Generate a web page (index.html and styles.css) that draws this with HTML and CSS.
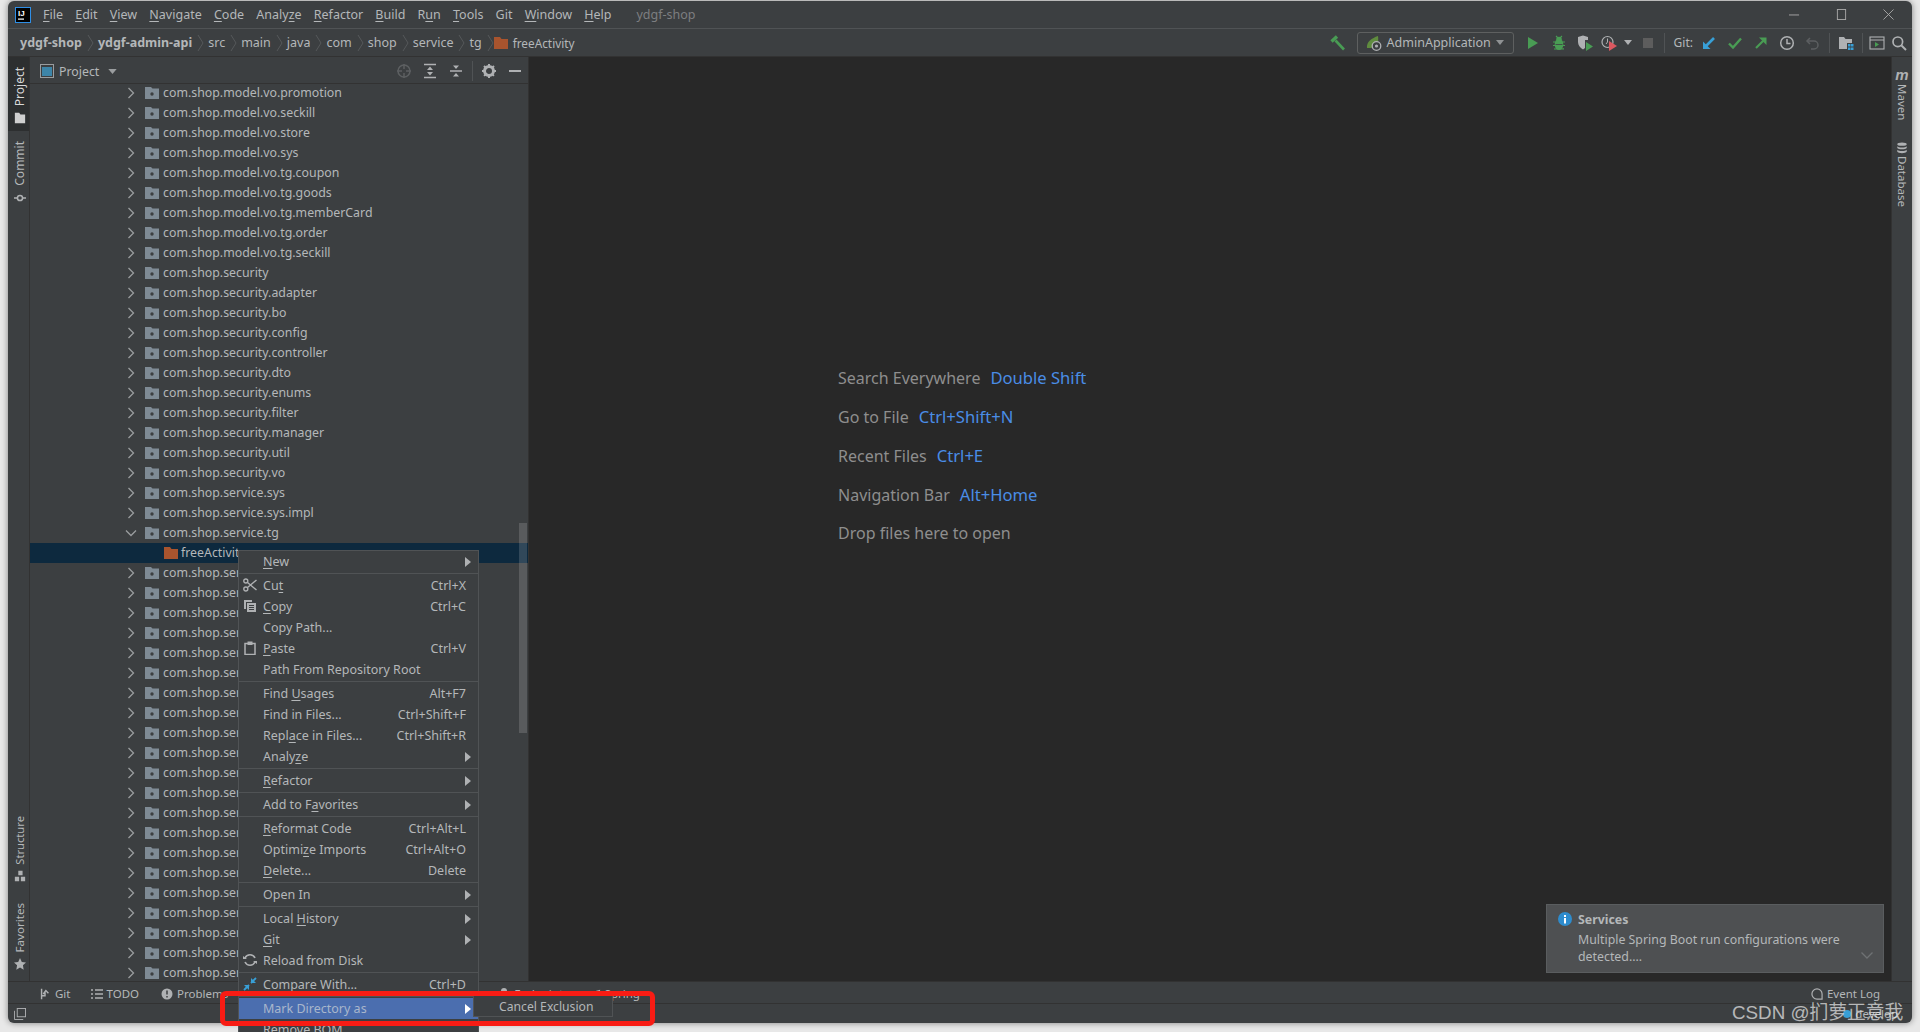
FILE: index.html
```html
<!DOCTYPE html>
<html lang="en">
<head>
<meta charset="utf-8">
<title>ydgf-shop</title>
<link rel="stylesheet" href="styles.css">
</head>
<body>
<svg class="defs" width="0" height="0">
  <defs>
    <symbol id="pkg" viewBox="0 0 14 12"><path d="M0 0h6l1.500 1.500H14V12H0z" fill="#7f8b95"/><circle cx="7" cy="7" r="1.700" fill="#3c3f41"/></symbol>
    <symbol id="chev" viewBox="0 0 8 12"><path d="M1.500 1l5 5-5 5" fill="none" stroke="#9a9d9f" stroke-width="1.300"/></symbol>
    <symbol id="sep" viewBox="0 0 8 20"><path d="M1 2l5 8-5 8" fill="none" stroke="#55585a" stroke-width="1"/></symbol>
    <symbol id="tri" viewBox="0 0 6 10"><path d="M0 0l6 5-6 5z" fill="#afb1b3"/></symbol>
  </defs>
</svg>
<div class="window">
  <header class="titlebar">
    <svg class="logo" viewBox="0 0 16 16"><rect x=".5" y=".5" width="15" height="15" fill="#000" stroke="#2f8fe6"/><text x="3" y="9" class="logo-t">IJ</text><rect x="3" y="11.500" width="6" height="1.200" fill="#fff"/></svg>
    <nav class="menubar">
      <span><u>F</u>ile</span><span><u>E</u>dit</span><span><u>V</u>iew</span><span><u>N</u>avigate</span><span><u>C</u>ode</span><span>Analy<u>z</u>e</span><span><u>R</u>efactor</span><span><u>B</u>uild</span><span>R<u>u</u>n</span><span><u>T</u>ools</span><span>Git</span><span><u>W</u>indow</span><span><u>H</u>elp</span>
    </nav>
    <span class="wintitle">ydgf-shop</span>
    <div class="winctl">
      <svg viewBox="0 0 12 12"><path d="M0 6.500h11" stroke="#a8a8a8" fill="none"/></svg>
      <svg viewBox="0 0 12 12"><rect x="1.500" y=".5" width="9" height="11" stroke="#a8a8a8" fill="none"/></svg>
      <svg viewBox="0 0 12 12"><path d="M.5.5l11 11M11.500.5l-11 11" stroke="#a8a8a8" fill="none"/></svg>
    </div>
  </header>
  <div class="navbar">
    <div class="crumbs">
      <b>ydgf-shop</b><svg class="csep"><use href="#sep"/></svg>
      <b>ydgf-admin-api</b><svg class="csep"><use href="#sep"/></svg>
      <span>src</span><svg class="csep"><use href="#sep"/></svg>
      <span>main</span><svg class="csep"><use href="#sep"/></svg>
      <span>java</span><svg class="csep"><use href="#sep"/></svg>
      <span>com</span><svg class="csep"><use href="#sep"/></svg>
      <span>shop</span><svg class="csep"><use href="#sep"/></svg>
      <span>service</span><svg class="csep"><use href="#sep"/></svg>
      <span>tg</span><svg class="csep"><use href="#sep"/></svg>
      <svg class="cfolder" viewBox="0 0 14 12"><path d="M0 0h6l1.500 2H14v10H0z" fill="#a8542e"/></svg><span class="clast">freeActivity</span>
    </div>
    <div class="tools">
      <svg class="ti" viewBox="0 0 16 16"><path d="M1.500 6.500L7 1.500" stroke="#499c54" stroke-width="3.400" fill="none"/><path d="M5.500 5.500l8.500 9" stroke="#499c54" stroke-width="2.600" fill="none"/></svg>
      <div class="combo m11">
        <svg class="ti" viewBox="0 0 16 16"><path d="M1 13C0 7 6 3 12 1c1 6-1 10-7 12z" fill="#5f8c3e"/><circle cx="10.500" cy="11" r="4.300" fill="#3c3f41" stroke="#afb1b3" stroke-width="1.300"/><circle cx="10.500" cy="11" r="1.600" fill="#afb1b3"/></svg>
        <span>AdminApplication</span>
        <svg class="dd" viewBox="0 0 10 6"><path d="M0 0h10L5 6z" fill="#8f9294"/></svg>
      </div>
      <svg class="ti m11" viewBox="0 0 16 16"><path d="M3 2l10 6-10 6z" fill="#499c54"/></svg>
      <svg class="ti m10" viewBox="0 0 16 16"><path d="M2 7h12M2 10.500h12M3 14l10-.1M5 1l2 2M11 1L9 3" stroke="#499c54" stroke-width="1.100" fill="none"/><circle cx="8" cy="4.500" r="2.800" fill="#499c54"/><ellipse cx="8" cy="9.500" rx="4.300" ry="5.500" fill="#499c54"/><path d="M4.500 9.500h7" stroke="#3c3f41" stroke-width=".8"/></svg>
      <svg class="ti m10" viewBox="0 0 16 16"><path d="M1 2l5-1.500 5 1.500v3H8v8l-2 1.500C3 13 1 10 1 7z" fill="#afb1b3"/><path d="M9 7l7 4.500L9 16z" fill="#499c54"/></svg>
      <svg class="ti m8" viewBox="0 0 16 16"><circle cx="6.500" cy="7" r="5.500" fill="none" stroke="#afb1b3" stroke-width="1.200"/><path d="M6.500 3.500V7L5 9" fill="none" stroke="#afb1b3"/><path d="M8 6l8 5-8 5z" fill="#db5860"/></svg>
      <svg class="dd m7" viewBox="0 0 8 5"><path d="M0 0h8L4 5z" fill="#afb1b3"/></svg>
      <svg class="ti m8" viewBox="0 0 16 16"><rect x="3" y="3" width="10" height="10" fill="#5d5d5d"/></svg>
      <i class="vsep m8"></i>
      <span class="gitlbl m9">Git:</span>
      <svg class="ti m8" viewBox="0 0 16 16"><path d="M3 13L13 3" stroke="#389fd6" stroke-width="2.600" fill="none"/><path d="M2 6.500V14h7.500z" fill="#389fd6"/></svg>
      <svg class="ti m10" viewBox="0 0 16 16"><path d="M2 8.500l4 4 8-9" stroke="#499c54" stroke-width="2.400" fill="none"/></svg>
      <svg class="ti m10" viewBox="0 0 16 16"><path d="M3 13L12 4" stroke="#499c54" stroke-width="2.200" fill="none"/><path d="M6 2.500h7.500V10z" fill="#499c54"/></svg>
      <svg class="ti m10" viewBox="0 0 16 16"><circle cx="8" cy="8" r="6.300" fill="none" stroke="#afb1b3" stroke-width="1.500"/><path d="M8 4v4.500h3.500" fill="none" stroke="#afb1b3" stroke-width="1.500"/></svg>
      <svg class="ti m10" viewBox="0 0 16 16"><path d="M5 3L2 6l3 3" fill="none" stroke="#5c5f61" stroke-width="1.500"/><path d="M2 6h7a3.800 3.800 0 0 1 0 8H6" fill="none" stroke="#5c5f61" stroke-width="1.500"/></svg>
      <i class="vsep m8"></i>
      <svg class="ti m8" viewBox="0 0 16 16"><path d="M1 2h5l1.500 2H14v4H9v6H1z" fill="#afb1b3"/><path d="M10 9h2.500v2.500H10zM13 9h2.500v2.500H13zM10 12.500h2.500V15H10zM13 12.500h2.500V15H13z" fill="#389fd6"/></svg>
      <i class="vsep m8"></i>
      <svg class="ti m6" viewBox="0 0 16 16"><rect x="1" y="2" width="14" height="12" fill="none" stroke="#afb1b3" stroke-width="1.100"/><path d="M1 5h14" stroke="#afb1b3" stroke-width="1"/><path d="M6 7l4 2.500L6 12z" fill="#499c54"/></svg>
      <svg class="ti m6" viewBox="0 0 16 16"><circle cx="6.800" cy="6.800" r="4.800" fill="none" stroke="#afb1b3" stroke-width="1.700"/><path d="M10.500 10.500l4.500 4.500" stroke="#afb1b3" stroke-width="2"/></svg>
    </div>
  </div>
  <main class="main">
    <aside class="strip strip-left">
      <div class="strip-group">
        <div class="vtab vtab-active">
          <span class="vtext">Project</span>
          <svg class="vicon" viewBox="0 0 14 14"><path d="M1 1h5l1.500 2H13v10H1z" fill="#cfcfcf"/></svg>
        </div>
        <div class="vtab">
          <span class="vtext">Commit</span>
          <svg class="vicon" viewBox="0 0 14 14"><circle cx="7" cy="7" r="3" fill="none" stroke="#afb1b3" stroke-width="1.800"/><path d="M0 7h4M10 7h4" stroke="#afb1b3" stroke-width="1.800"/></svg>
        </div>
      </div>
      <div class="strip-group">
        <div class="vtab vtab-low vtab-struct">
          <span class="vtext vtext-sm">Structure</span>
          <svg class="vicon" viewBox="0 0 14 14"><path d="M5 1h5v5H5zM1 8h5v5H1zM8 8h5v5H8z" fill="#afb1b3"/></svg>
        </div>
        <div class="vtab vtab-low">
          <span class="vtext vtext-fav">Favorites</span>
          <svg class="vicon" viewBox="0 0 14 14"><path d="M7 0l2.100 4.600 4.900.6-3.600 3.400.9 5L7 11.200 2.700 13.600l.9-5L0 5.200l4.900-.6z" fill="#afb1b3"/></svg>
        </div>
      </div>
    </aside>
    <section class="project">
      <div class="phead">
        <svg class="pico" viewBox="0 0 14 14"><rect x=".5" y=".5" width="13" height="13" fill="#3c3f41" stroke="#9a9d9f"/><rect x="2" y="3" width="10" height="9" fill="#3d85a8"/></svg>
        <span class="ptitle">Project</span>
        <svg class="pdrop" viewBox="0 0 10 6"><path d="M0 0h10L5 6z" fill="#9a9d9f"/></svg>
        <div class="pactions">
          <svg class="ti" viewBox="0 0 16 16"><circle cx="8" cy="8" r="6" fill="none" stroke="#5c5f61" stroke-width="1.500"/><path d="M8 1v5M8 10v5M1 8h5M10 8h5" stroke="#5c5f61" stroke-width="1.500"/></svg>
          <svg class="ti m10" viewBox="0 0 16 16"><path d="M2 1.500h12M2 14.500h12" stroke="#afb1b3" stroke-width="1.600"/><path d="M8 3.500l3 3.500H5zM8 12.500L11 9H5z" fill="#afb1b3"/></svg>
          <svg class="ti m10" viewBox="0 0 16 16"><path d="M2 8h12" stroke="#afb1b3" stroke-width="1.600"/><path d="M8 6L5 2.500h6zM8 10l3 3.500H5z" fill="#afb1b3"/></svg>
          <i class="vsep m8"></i>
          <svg class="ti m8" viewBox="0 0 16 16"><circle cx="8" cy="8" r="4.500" fill="none" stroke="#afb1b3" stroke-width="3"/><path d="M8 1v14M1 8h14M3 3l10 10M13 3L3 13" stroke="#afb1b3" stroke-width="2" stroke-dasharray="2.500 9"/></svg>
          <svg class="ti m10" viewBox="0 0 16 16"><path d="M2 8h12" stroke="#afb1b3" stroke-width="1.800"/></svg>
        </div>
      </div>
      <div class="tree">
        <div class="row"><svg class="ch"><use href="#chev"/></svg><svg class="fo"><use href="#pkg"/></svg>com.shop.model.vo.promotion</div>
        <div class="row"><svg class="ch"><use href="#chev"/></svg><svg class="fo"><use href="#pkg"/></svg>com.shop.model.vo.seckill</div>
        <div class="row"><svg class="ch"><use href="#chev"/></svg><svg class="fo"><use href="#pkg"/></svg>com.shop.model.vo.store</div>
        <div class="row"><svg class="ch"><use href="#chev"/></svg><svg class="fo"><use href="#pkg"/></svg>com.shop.model.vo.sys</div>
        <div class="row"><svg class="ch"><use href="#chev"/></svg><svg class="fo"><use href="#pkg"/></svg>com.shop.model.vo.tg.coupon</div>
        <div class="row"><svg class="ch"><use href="#chev"/></svg><svg class="fo"><use href="#pkg"/></svg>com.shop.model.vo.tg.goods</div>
        <div class="row"><svg class="ch"><use href="#chev"/></svg><svg class="fo"><use href="#pkg"/></svg>com.shop.model.vo.tg.memberCard</div>
        <div class="row"><svg class="ch"><use href="#chev"/></svg><svg class="fo"><use href="#pkg"/></svg>com.shop.model.vo.tg.order</div>
        <div class="row"><svg class="ch"><use href="#chev"/></svg><svg class="fo"><use href="#pkg"/></svg>com.shop.model.vo.tg.seckill</div>
        <div class="row"><svg class="ch"><use href="#chev"/></svg><svg class="fo"><use href="#pkg"/></svg>com.shop.security</div>
        <div class="row"><svg class="ch"><use href="#chev"/></svg><svg class="fo"><use href="#pkg"/></svg>com.shop.security.adapter</div>
        <div class="row"><svg class="ch"><use href="#chev"/></svg><svg class="fo"><use href="#pkg"/></svg>com.shop.security.bo</div>
        <div class="row"><svg class="ch"><use href="#chev"/></svg><svg class="fo"><use href="#pkg"/></svg>com.shop.security.config</div>
        <div class="row"><svg class="ch"><use href="#chev"/></svg><svg class="fo"><use href="#pkg"/></svg>com.shop.security.controller</div>
        <div class="row"><svg class="ch"><use href="#chev"/></svg><svg class="fo"><use href="#pkg"/></svg>com.shop.security.dto</div>
        <div class="row"><svg class="ch"><use href="#chev"/></svg><svg class="fo"><use href="#pkg"/></svg>com.shop.security.enums</div>
        <div class="row"><svg class="ch"><use href="#chev"/></svg><svg class="fo"><use href="#pkg"/></svg>com.shop.security.filter</div>
        <div class="row"><svg class="ch"><use href="#chev"/></svg><svg class="fo"><use href="#pkg"/></svg>com.shop.security.manager</div>
        <div class="row"><svg class="ch"><use href="#chev"/></svg><svg class="fo"><use href="#pkg"/></svg>com.shop.security.util</div>
        <div class="row"><svg class="ch"><use href="#chev"/></svg><svg class="fo"><use href="#pkg"/></svg>com.shop.security.vo</div>
        <div class="row"><svg class="ch"><use href="#chev"/></svg><svg class="fo"><use href="#pkg"/></svg>com.shop.service.sys</div>
        <div class="row"><svg class="ch"><use href="#chev"/></svg><svg class="fo"><use href="#pkg"/></svg>com.shop.service.sys.impl</div>
        <div class="row"><svg class="ch"><path d="M1 3.500l5 5 5-5" fill="none" stroke="#9a9d9f" stroke-width="1.300"/></svg><svg class="fo"><use href="#pkg"/></svg>com.shop.service.tg</div>
        <div class="row row-sel"><svg class="fo fo-sel" viewBox="0 0 14 12"><path d="M0 0h6l1.500 2H14v10H0z" fill="#a8542e"/></svg>freeActivity</div>
        <div class="row"><svg class="ch"><use href="#chev"/></svg><svg class="fo"><use href="#pkg"/></svg>com.shop.service</div>
        <div class="row"><svg class="ch"><use href="#chev"/></svg><svg class="fo"><use href="#pkg"/></svg>com.shop.service</div>
        <div class="row"><svg class="ch"><use href="#chev"/></svg><svg class="fo"><use href="#pkg"/></svg>com.shop.service</div>
        <div class="row"><svg class="ch"><use href="#chev"/></svg><svg class="fo"><use href="#pkg"/></svg>com.shop.service</div>
        <div class="row"><svg class="ch"><use href="#chev"/></svg><svg class="fo"><use href="#pkg"/></svg>com.shop.service</div>
        <div class="row"><svg class="ch"><use href="#chev"/></svg><svg class="fo"><use href="#pkg"/></svg>com.shop.service</div>
        <div class="row"><svg class="ch"><use href="#chev"/></svg><svg class="fo"><use href="#pkg"/></svg>com.shop.service</div>
        <div class="row"><svg class="ch"><use href="#chev"/></svg><svg class="fo"><use href="#pkg"/></svg>com.shop.service</div>
        <div class="row"><svg class="ch"><use href="#chev"/></svg><svg class="fo"><use href="#pkg"/></svg>com.shop.service</div>
        <div class="row"><svg class="ch"><use href="#chev"/></svg><svg class="fo"><use href="#pkg"/></svg>com.shop.service</div>
        <div class="row"><svg class="ch"><use href="#chev"/></svg><svg class="fo"><use href="#pkg"/></svg>com.shop.service</div>
        <div class="row"><svg class="ch"><use href="#chev"/></svg><svg class="fo"><use href="#pkg"/></svg>com.shop.service</div>
        <div class="row"><svg class="ch"><use href="#chev"/></svg><svg class="fo"><use href="#pkg"/></svg>com.shop.service</div>
        <div class="row"><svg class="ch"><use href="#chev"/></svg><svg class="fo"><use href="#pkg"/></svg>com.shop.service</div>
        <div class="row"><svg class="ch"><use href="#chev"/></svg><svg class="fo"><use href="#pkg"/></svg>com.shop.service</div>
        <div class="row"><svg class="ch"><use href="#chev"/></svg><svg class="fo"><use href="#pkg"/></svg>com.shop.service</div>
        <div class="row"><svg class="ch"><use href="#chev"/></svg><svg class="fo"><use href="#pkg"/></svg>com.shop.service</div>
        <div class="row"><svg class="ch"><use href="#chev"/></svg><svg class="fo"><use href="#pkg"/></svg>com.shop.service</div>
        <div class="row"><svg class="ch"><use href="#chev"/></svg><svg class="fo"><use href="#pkg"/></svg>com.shop.service</div>
        <div class="row"><svg class="ch"><use href="#chev"/></svg><svg class="fo"><use href="#pkg"/></svg>com.shop.service</div>
        <div class="row"><svg class="ch"><use href="#chev"/></svg><svg class="fo"><use href="#pkg"/></svg>com.shop.service</div>
      </div>
      <div class="scrollthumb"></div>
    </section>
    <section class="editor">
      <p class="hint">Search Everywhere<em>Double Shift</em></p>
      <p class="hint">Go to File<em>Ctrl+Shift+N</em></p>
      <p class="hint">Recent Files<em>Ctrl+E</em></p>
      <p class="hint">Navigation Bar<em>Alt+Home</em></p>
      <p class="hint">Drop files here to open</p>
    </section>
    <aside class="strip strip-right">
      <div class="vtab-r">
        <span class="mvn">m</span>
        <span class="vtext-r">Maven</span>
      </div>
      <div class="vtab-r vtab-db">
        <svg class="vicon" viewBox="0 0 14 14"><ellipse cx="7" cy="2.500" rx="5.500" ry="2" fill="#afb1b3"/><path d="M1.500 5c1 2 10 2 11 0v2c-1 2-10 2-11 0zM1.500 9c1 2 10 2 11 0v2.500c-1 2-10 2-11 0z" fill="#afb1b3"/></svg>
        <span class="vtext-r">Database</span>
      </div>
    </aside>
  </main>
  <div class="toolbar">
    <span class="tool"><svg class="tsm" viewBox="0 0 12 14"><path d="M2 1v12M2 9h4V5M4 7l3-4 3 3" fill="none" stroke="#afb1b3" stroke-width="1.700"/></svg>Git</span>
    <span class="tool tool-todo"><svg class="tsm" viewBox="0 0 12 12"><path d="M0 2h2M4 2h8M0 6h2M4 6h8M0 10h2M4 10h8" stroke="#afb1b3" stroke-width="1.600"/></svg>TODO</span>
    <span class="tool tool-prob"><svg class="tsm" viewBox="0 0 12 12"><circle cx="6" cy="6" r="5.500" fill="#afb1b3"/><path d="M6 2.500v4M6 8v1.500" stroke="#3c3f41" stroke-width="1.500"/></svg>Problems</span>
    <span class="tool tool-end"><svg class="tsm" viewBox="0 0 12 12"><circle cx="6" cy="3" r="3" fill="#afb1b3"/><path d="M1 12c0-6 10-6 10 0z" fill="#afb1b3"/></svg>Endpoints</span>
    <span class="tool tool-spring"><svg class="tsm" viewBox="0 0 14 12"><path d="M1 11C1 5 7 2 13 1c0 6-4 10-12 10z" fill="#afb1b3"/></svg>Spring</span>
    <span class="tool tool-log"><svg class="tsm" viewBox="0 0 13 13"><path d="M6.500 1a5.500 5.500 0 1 0 0 11H12V6.500A5.500 5.500 0 0 0 6.500 1z" fill="none" stroke="#afb1b3" stroke-width="1.300"/></svg>Event Log</span>
  </div>
  <footer class="statusbar">
    <svg class="tsm" viewBox="0 0 13 13"><rect x="3.500" y=".5" width="9" height="9" fill="none" stroke="#afb1b3"/><path d="M.5 3v9.500H10" fill="none" stroke="#afb1b3"/></svg>
    <span class="branch"><i class="bdot"></i>develop</span>
  </footer>
</div>

<div class="scrim-note">
  <div class="note-head">
    <svg class="note-i" viewBox="0 0 14 14"><circle cx="7" cy="7" r="7" fill="#2e8cce"/><rect x="6" y="6" width="2" height="5.500" fill="#fff"/><rect x="6" y="3" width="2" height="2" fill="#fff"/></svg>
    <b>Services</b>
  </div>
  <p>Multiple Spring Boot run configurations were detected....</p>
  <svg class="note-ch" viewBox="0 0 12 7"><path d="M.5.5L6 6 11.500.5" fill="none" stroke="#6f7274" stroke-width="1.300"/></svg>
</div>

<div class="ctx">
  <div class="mi"><span><u>N</u>ew</span><svg class="arr"><use href="#tri"/></svg></div>
  <hr>
  <div class="mi"><svg class="mico" viewBox="0 0 14 14"><circle cx="2.800" cy="3" r="2" fill="none" stroke="#afb1b3" stroke-width="1.400"/><circle cx="2.800" cy="11" r="2" fill="none" stroke="#afb1b3" stroke-width="1.400"/><path d="M4.500 4.500L13.500 12M4.500 9.500L13.500 2" stroke="#afb1b3" stroke-width="1.400"/></svg><span>Cu<u>t</u></span><kbd>Ctrl+X</kbd></div>
  <div class="mi"><svg class="mico" viewBox="0 0 14 14"><path d="M1 1h8v2H3v7H1z" fill="#afb1b3"/><rect x="4" y="4" width="9" height="9" fill="#afb1b3"/><path d="M6 6.500h5M6 8.500h5M6 10.500h5" stroke="#3c3f41"/></svg><span><u>C</u>opy</span><kbd>Ctrl+C</kbd></div>
  <div class="mi"><span>Copy Path...</span></div>
  <div class="mi"><svg class="mico" viewBox="0 0 14 14"><rect x="2" y="2.500" width="10" height="11" fill="none" stroke="#afb1b3" stroke-width="1.500"/><rect x="4.500" y="0.500" width="5" height="3.500" fill="#afb1b3"/></svg><span><u>P</u>aste</span><kbd>Ctrl+V</kbd></div>
  <div class="mi"><span>Path From Repository Root</span></div>
  <hr>
  <div class="mi"><span>Find <u>U</u>sages</span><kbd>Alt+F7</kbd></div>
  <div class="mi"><span>Find in Files...</span><kbd>Ctrl+Shift+F</kbd></div>
  <div class="mi"><span>Repl<u>a</u>ce in Files...</span><kbd>Ctrl+Shift+R</kbd></div>
  <div class="mi"><span>Analy<u>z</u>e</span><svg class="arr"><use href="#tri"/></svg></div>
  <hr>
  <div class="mi"><span><u>R</u>efactor</span><svg class="arr"><use href="#tri"/></svg></div>
  <hr>
  <div class="mi"><span>Add to F<u>a</u>vorites</span><svg class="arr"><use href="#tri"/></svg></div>
  <hr>
  <div class="mi"><span><u>R</u>eformat Code</span><kbd>Ctrl+Alt+L</kbd></div>
  <div class="mi"><span>Optimi<u>z</u>e Imports</span><kbd>Ctrl+Alt+O</kbd></div>
  <div class="mi"><span><u>D</u>elete...</span><kbd>Delete</kbd></div>
  <hr>
  <div class="mi"><span>Open In</span><svg class="arr"><use href="#tri"/></svg></div>
  <hr>
  <div class="mi"><span>Local <u>H</u>istory</span><svg class="arr"><use href="#tri"/></svg></div>
  <div class="mi"><span><u>G</u>it</span><svg class="arr"><use href="#tri"/></svg></div>
  <div class="mi"><svg class="mico" viewBox="0 0 14 14"><path d="M12 5A5.500 5.500 0 0 0 2 5M2 9a5.500 5.500 0 0 0 10 0" fill="none" stroke="#afb1b3" stroke-width="1.600"/><path d="M0 3l4 3H0zM14 11l-4-3h4z" fill="#afb1b3"/></svg><span>Reload from Disk</span></div>
  <hr>
  <div class="mi"><svg class="mico" viewBox="0 0 14 14"><path d="M1 13l5-5M13 1L8 6" stroke="#389fd6" stroke-width="1.800"/><path d="M8 1v5h5z" fill="#389fd6"/><path d="M6 13V8H1z" fill="#389fd6"/></svg><span>Compare With...</span><kbd>Ctrl+D</kbd></div>
  <hr>
  <div class="mi mi-sel"><span>Mark Directory as</span><svg class="arr"><path d="M0 0l6 5-6 5z" fill="#fff"/></svg></div>
  <div class="mi"><span>Remove BOM</span></div>
</div>
<div class="submenu">Cancel Exclusion</div>
<div class="redbox"></div>
<div class="watermark">CSDN @扪萝正意我</div>
</body>
</html>
```

FILE: styles.css
```css
* { box-sizing: border-box; }
html, body { margin: 0; padding: 0; }
body {
  position: relative;
  width: 1920px;
  height: 1032px;
  overflow: hidden;
  background: #e8e8e8;
  font-family: "Noto Sans", "Open Sans", sans-serif;
  font-size: 12.500px;
  color: #b4b7b9;
}
.defs { position: absolute; }
u { text-underline-offset: 2px; }

.window {
  width: 1904px;
  height: 1022px;
  margin: 1px 8px 0;
  background: #3c3f41;
  border-radius: 6px 6px 6px 6px;
  box-shadow: 0 0 6px rgba(0, 0, 0, .45);
  display: flex;
  flex-direction: column;
  overflow: hidden;
}

/* title bar */
.titlebar {
  height: 28px;
  flex: none;
  display: flex;
  align-items: center;
  padding-left: 7px;
  border-bottom: 1px solid #505355;
}
.logo { width: 16px; height: 16px; flex: none; }
.logo-t { font: bold 8px "Liberation Sans", sans-serif; fill: #fff; }
.menubar { display: flex; gap: 12.200px; margin-left: 12px; }
.wintitle { margin-left: 25px; color: #7c7e80; }
.winctl {
  margin-left: auto;
  display: flex;
  gap: 36px;
  padding-right: 18px;
}
.winctl svg { width: 11px; height: 11px; }

/* navigation bar */
.navbar {
  height: 28px;
  flex: none;
  display: flex;
  align-items: center;
  justify-content: space-between;
  border-bottom: 1px solid #323232;
}
.crumbs { display: flex; align-items: center; padding-left: 12px; }
.crumbs b { color: #b4b7b9; font-weight: 700; }
.csep { width: 8px; height: 20px; margin: 0 3px 0 5px; }
.cfolder { width: 14px; height: 12px; margin: 0 5px 0 -4px; }
.clast { font-size: 11.800px; }
.tools { display: flex; align-items: center; padding-right: 5px; }
.ti { width: 16px; height: 16px; flex: none; display: block; }
.dd { width: 8px; height: 5px; flex: none; }
.m6 { margin-left: 6px; } .m7 { margin-left: 7px; } .m8 { margin-left: 8px; }
.m9 { margin-left: 9px; } .m10 { margin-left: 10px; } .m11 { margin-left: 11px; }
.combo {
  width: 157px;
  height: 22px;
  display: flex;
  align-items: center;
  border: 1px solid #5e6060;
  border-radius: 3px;
  padding: 0 9px 0 8px;
  gap: 5px;
}
.combo .dd { margin-left: auto; }
.vsep { display: block; width: 1px; height: 20px; background: #505355; flex: none; }
.gitlbl { white-space: nowrap; font-size: 12px; }

/* main */
.main { flex: 1; display: flex; min-height: 0; position: relative; }
.strip { flex: none; display: flex; flex-direction: column; }
.strip-left {
  width: 22px;
  justify-content: space-between;
  border-right: 1px solid #323232;
}
.vtab {
  display: flex;
  flex-direction: column;
  align-items: center;
  padding: 10px 0 9px 2px;
  gap: 6px;
}
.vtab-active { background: #2d2f30; height: 74px; color: #d8d8d8; }
.vtab-low { padding: 0 0 11px 2px; }
.vtab-struct { padding-bottom: 21px; gap: 5px; }
.vtext {
  writing-mode: vertical-rl;
  transform: rotate(180deg);
  line-height: 21px;
  font-size: 12px;
}
.vtext-sm { font-size: 11.200px; }
.vtext-fav { font-size: 11.600px; }
.vicon { width: 12px; height: 12px; display: block; flex: none; }

.project {
  width: 499px;
  flex: none;
  display: flex;
  flex-direction: column;
  position: relative;
  border-right: 1px solid #323232;
  overflow: hidden;
  font-size: 12.350px;
}
.phead {
  height: 27px;
  flex: none;
  display: flex;
  align-items: center;
  padding: 2px 0 0 10px;
  border-bottom: 1px solid #323232;
}
.pico { width: 14px; height: 14px; }
.ptitle { margin-left: 5px; }
.pdrop { width: 9px; height: 5px; margin-left: 9px; }
.pactions { margin-left: auto; padding-right: 5px; display: flex; align-items: center; }
.tree { flex: 1; overflow: hidden; }
.row {
  height: 20px;
  display: flex;
  align-items: center;
  padding-left: 95px;
  line-height: 20px;
  white-space: nowrap;
}
.row:first-child { margin-top: -1px; }
.ch { width: 12px; height: 12px; flex: none; margin-right: 8px; }
.fo { width: 14px; height: 12px; flex: none; margin-right: 4px; }
.row-sel { background: #0d293e; padding-left: 134px; }
.fo-sel { margin-right: 3px; }
.scrollthumb {
  position: absolute;
  right: 1px;
  top: 466px;
  width: 8px;
  height: 210px;
  background: rgba(255, 255, 255, .15);
}

.editor {
  flex: 1;
  background: #282828;
  padding: 301px 0 0 309px;
  font-size: 16px;
  color: #8e8e8e;
}
.hint { margin: 0; height: 39px; line-height: 39px; white-space: nowrap; }
.hint em { font-style: normal; color: #4a8de6; margin-left: 10px; font-size: 16.600px; }

.strip-right { width: 21px; align-items: center; border-left: 1px solid #323232; }
.vtab-r { display: flex; flex-direction: column; align-items: center; gap: 2px; padding-top: 10px; }
.vtab-db { padding-top: 22px; gap: 2px; }
.vtext-r { writing-mode: vertical-rl; line-height: 20px; font-size: 11.500px; }
.mvn { font: italic bold 15px/15px "Liberation Sans", sans-serif; color: #afb1b3; }

/* bottom */
.toolbar {
  height: 22px;
  flex: none;
  display: flex;
  align-items: center;
  border-top: 1px solid #323232;
  font-size: 11.500px;
  padding: 2px 0 0 31px;
}
.tool { display: inline-flex; align-items: center; gap: 4px; white-space: nowrap; }
.tsm { width: 12px; height: 12px; flex: none; display: block; }
.tool-todo { margin-left: 20px; }
.tool-prob { margin-left: 22px; }
.tool-end { margin-left: 270px; }
.tool-spring { margin-left: 20px; }
.tool-log { margin-left: auto; padding-right: 32px; }
.statusbar {
  height: 20px;
  flex: none;
  display: flex;
  align-items: center;
  justify-content: space-between;
  border-top: 1px solid #323232;
  padding: 0 14px 0 6px;
  font-size: 11.500px;
}
.branch { display: inline-flex; align-items: center; gap: 4px; }
.bdot { width: 8px; height: 8px; border-radius: 50%; background: #389fd6; }

/* notification */
.scrim-note {
  position: absolute;
  left: 1546px;
  top: 904px;
  width: 338px;
  height: 69px;
  background: #4e5052;
  border: 1px solid #5a5d5f;
  padding: 6px 14px 0 31px;
  line-height: 17px;
  color: #b4b7b9;
  font-size: 12.350px;
}
.scrim-note p { margin: 3px 0 0; }
.note-head { position: relative; }
.note-head b { font-weight: 700; }
.note-i { position: absolute; left: -20px; top: 1px; width: 14px; height: 14px; }
.note-ch { position: absolute; right: 10px; bottom: 13px; width: 12px; height: 7px; }

/* context menu */
.ctx {
  position: absolute;
  left: 238px;
  top: 550px;
  width: 241px;
  background: #3c3f41;
  border: 1px solid #505355;
  font-size: 12.500px;
  color: #b4b7b9;
}
.ctx hr { margin: 1px 0; height: 1px; border: 0; background: #505355; }
.mi {
  height: 21px;
  display: flex;
  align-items: center;
  justify-content: space-between;
  padding: 0 7px 0 24px;
  position: relative;
  white-space: nowrap;
}
.mi kbd { font: inherit; padding-right: 5px; }
.mico { position: absolute; left: 4px; top: 3px; width: 14px; height: 14px; }
.arr { width: 6px; height: 10px; }
.mi-sel { background: #4b6eaf; color: #a8b6cc; }
.submenu {
  position: absolute;
  left: 473px;
  top: 995px;
  width: 140px;
  height: 22px;
  background: #3c3f41;
  border: 1px solid #505355;
  padding-left: 25px;
  line-height: 21px;
  font-size: 12.200px;
  color: #b4b7b9;
}
.redbox {
  position: absolute;
  left: 220px;
  top: 991px;
  width: 435px;
  height: 35px;
  border: 5px solid #f81c14;
  border-radius: 6px;
}
.watermark {
  position: absolute;
  left: 1732px;
  top: 999px;
  font: 18.800px/28px "Liberation Sans", "Noto Sans CJK SC", sans-serif;
  color: rgba(232, 232, 232, .72);
  white-space: nowrap;
}
```
